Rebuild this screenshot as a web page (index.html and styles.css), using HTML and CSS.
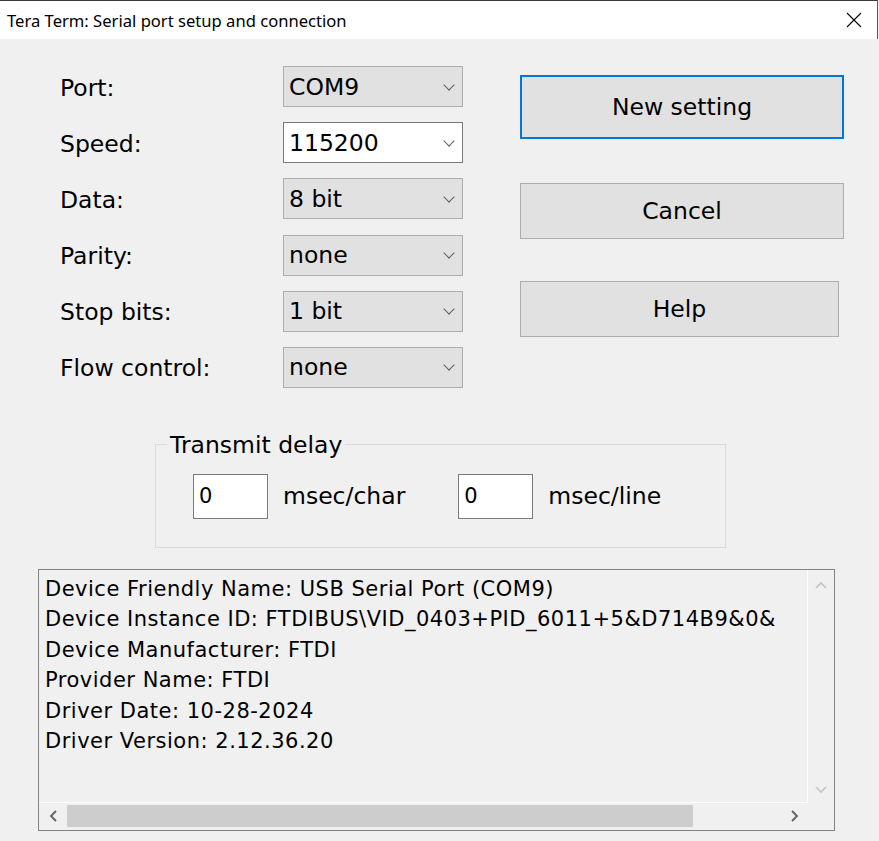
FILE: index.html
```html
<!DOCTYPE html>
<html lang="en">
<head>
    <meta charset="UTF-8">
    <title>Tera Term: Serial port setup and connection</title>
    <link rel="stylesheet" href="styles.css">
</head>
<body>
    <div class="window">
        <div class="titlebar">
            <span class="title">Tera Term: Serial port setup and connection</span>
            <span class="close">
                <svg width="16" height="16" viewBox="0 0 16 16">
                    <path d="M1 1 L15 15 M15 1 L1 15" stroke="#000" stroke-width="1.1" fill="none"/>
                </svg>
            </span>
        </div>

        <div class="content">
            <div class="top">
                <div class="form">
                    <label>Port:</label>
                    <div class="combo"><span>COM9</span><i class="chev"></i></div>
                    <label>Speed:</label>
                    <div class="combo edit"><span>115200</span><i class="chev"></i></div>
                    <label>Data:</label>
                    <div class="combo"><span>8 bit</span><i class="chev"></i></div>
                    <label>Parity:</label>
                    <div class="combo"><span>none</span><i class="chev"></i></div>
                    <label>Stop bits:</label>
                    <div class="combo"><span>1 bit</span><i class="chev"></i></div>
                    <label>Flow control:</label>
                    <div class="combo"><span>none</span><i class="chev"></i></div>
                </div>

                <div class="buttons">
                    <button class="btn default">New setting</button>
                    <button class="btn cancel">Cancel</button>
                    <button class="btn help">Help</button>
                </div>
            </div>

            <fieldset class="delay">
                <legend>Transmit delay</legend>
                <div class="delay-row">
                    <div class="num">0</div>
                    <span class="unit">msec/char</span>
                    <div class="num second">0</div>
                    <span class="unit">msec/line</span>
                </div>
            </fieldset>

            <div class="info">
                <div class="info-text">
                    Device Friendly Name: USB Serial Port (COM9)<br>
                    Device Instance ID: FTDIBUS\VID_0403+PID_6011+5&amp;D714B9&amp;0&amp;<br>
                    Device Manufacturer: FTDI<br>
                    Provider Name: FTDI<br>
                    Driver Date: 10-28-2024<br>
                    Driver Version: 2.12.36.20
                </div>
                <div class="vbar">
                    <svg width="12" height="8" viewBox="0 0 12 8"><polyline points="1,7 6,2 11,7" stroke="#c4c4c4" stroke-width="1.6" fill="none"/></svg>
                    <svg width="12" height="8" viewBox="0 0 12 8"><polyline points="1,1 6,6 11,1" stroke="#c4c4c4" stroke-width="1.6" fill="none"/></svg>
                </div>
                <div class="hbar">
                    <div class="arrow">
                        <svg width="8" height="12" viewBox="0 0 8 12"><polyline points="7,1 2,6 7,11" stroke="#606060" stroke-width="1.8" fill="none"/></svg>
                    </div>
                    <div class="track"><div class="thumb"></div></div>
                    <div class="arrow">
                        <svg width="8" height="12" viewBox="0 0 8 12"><polyline points="1,1 6,6 1,11" stroke="#606060" stroke-width="1.8" fill="none"/></svg>
                    </div>
                </div>
                <div class="corner"></div>
            </div>
        </div>
    </div>
</body>
</html>
```

FILE: styles.css
```css
body {
    margin: 0;
    background-color: #f0f0f0;
    font-family: 'DejaVu Sans', sans-serif;
    color: #000;
}

.window {
    width: 879px;
    height: 841px;
    overflow: hidden;
}

.titlebar {
    height: 38px;
    background-color: #fff;
    border-top: 1px solid #3a3a3a;
    border-right: 1px solid #5a5a5a;
    margin-right: 1px;
    display: flex;
    align-items: center;
    justify-content: space-between;
    padding-left: 7px;
}

.title {
    font-family: 'Noto Sans', sans-serif;
    font-size: 16.6px;
    color: #000;
}

.close {
    width: 47px;
    display: flex;
    justify-content: center;
    align-items: center;
}

.content {
    padding-top: 27px;
}

.top {
    display: flex;
}

.form {
    display: grid;
    grid-template-columns: 223px 180px;
    grid-auto-rows: 41px;
    row-gap: 15.2px;
    padding-left: 60px;
    font-size: 23.5px;
}

.form label {
    display: flex;
    align-items: center;
    padding-top: 2px;
}

.combo {
    display: flex;
    align-items: center;
    justify-content: space-between;
    background-color: #e1e1e1;
    border: 1px solid #adadad;
    padding: 0 9px 0 5px;
}

.combo.edit {
    background-color: #fff;
    border-color: #7a7a7a;
}

.chev {
    width: 7px;
    height: 7px;
    border-right: 1.3px solid #606060;
    border-bottom: 1.3px solid #606060;
    transform: rotate(45deg);
    margin-top: -4px;
}

.buttons {
    display: flex;
    flex-direction: column;
    margin-left: 57px;
}

.btn {
    font-family: 'DejaVu Sans', sans-serif;
    font-size: 23.5px;
    background-color: #e1e1e1;
    border: 1px solid #adadad;
    color: #000;
    padding: 0;
    width: 324px;
    height: 56px;
}

.btn.default {
    margin-top: 9px;
    height: 64px;
    border: 2px solid #0078d7;
    box-shadow: inset 0 0 0 1px #e1e1e1;
}

.btn.cancel {
    margin-top: 44px;
}

.btn.help {
    margin-top: 42px;
    width: 319px;
}

.delay {
    margin: 43px 0 0 155px;
    width: 571px;
    box-sizing: border-box;
    border: 1px solid #dcdcdc;
    padding: 0 0 28px 0;
    font-size: 23.5px;
}

.delay legend {
    margin-left: 11px;
    padding: 0 3px;
    line-height: 28px;
}

.delay-row {
    display: flex;
    align-items: center;
    margin-top: 15px;
    padding-left: 37px;
}

.num {
    width: 75px;
    height: 45px;
    box-sizing: border-box;
    background-color: #fff;
    border: 1px solid #7a7a7a;
    padding-left: 5px;
    font-size: 21px;
    line-height: 42px;
}

.unit {
    margin-left: 15px;
}

.num.second {
    margin-left: 53px;
}

.info {
    margin: 21px 0 0 38px;
    width: 797px;
    height: 262px;
    box-sizing: border-box;
    border: 1px solid #828282;
    display: grid;
    grid-template-columns: 1fr 26px;
    grid-template-rows: 1fr 27px;
}

.info-text {
    border-right: 1px solid #fff;
    border-bottom: 1px solid #fff;
    padding: 4px 0 0 6px;
    font-size: 21px;
    letter-spacing: 0.5px;
    line-height: 30.5px;
    white-space: nowrap;
    overflow: hidden;
}

.vbar {
    display: flex;
    flex-direction: column;
    justify-content: space-between;
    align-items: center;
    padding: 11px 0 9px 0;
}

.hbar {
    display: grid;
    grid-template-columns: 27px 1fr 27px;
}

.arrow {
    display: flex;
    align-items: center;
    justify-content: center;
}

.track {
    display: flex;
    align-items: center;
    padding-left: 1px;
}

.thumb {
    width: 626px;
    height: 22px;
    background-color: #cdcdcd;
}

.corner {
    background-color: #f0f0f0;
}
```
